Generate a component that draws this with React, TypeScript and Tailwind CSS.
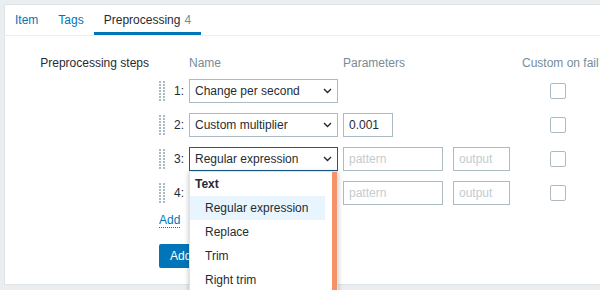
import React from 'react'

const font = { fontFamily: '"Liberation Sans", Arial, sans-serif' }

function DragHandle() {
  return (
    <svg width="6" height="20" viewBox="0 0 6 20" className="shrink-0">
      {[0, 3, 6, 9, 12, 15, 18].map(y => (
        <g key={y} fill="#acbbc2">
          <rect x="0" y={y} width="2" height="2" />
          <rect x="4" y={y} width="2" height="2" />
        </g>
      ))}
    </svg>
  )
}

function Chevron() {
  return (
    <svg width="9" height="6" viewBox="0 0 9 6" className="shrink-0">
      <path d="M1 1 L4.5 4.5 L8 1" fill="none" stroke="#1f2c33" strokeWidth="1.4" />
    </svg>
  )
}

function Select({ value, focused = false, children }: { value: string; focused?: boolean; children?: React.ReactNode }) {
  return (
    <div className="relative w-[149px] h-[24px] shrink-0">
      <div
        className={`w-full h-full flex items-center justify-between pl-[5px] pr-[5px] bg-white border ${
          focused ? 'border-[#1b5c8c]' : 'border-[#acbbc2]'
        }`}
      >
        <span className="text-[12px] text-[#1f2c33] truncate">{value}</span>
        <Chevron />
      </div>
      {children}
    </div>
  )
}

function Input({ w, value, placeholder }: { w: string; value?: string; placeholder?: string }) {
  return (
    <div className={`${w} h-[24px] border border-[#acbbc2] bg-white flex items-center px-[5px] shrink-0`}>
      {value ? (
        <span className="text-[12px] text-[#1f2c33]">{value}</span>
      ) : (
        <span className="text-[12px] text-[#c3ccd1]">{placeholder}</span>
      )}
    </div>
  )
}

function Checkbox() {
  return (
    <div className="w-[176px] flex">
      <div className="ml-[28px] w-[16px] h-[16px] border border-[#acbbc2] rounded-[2px] bg-white" />
    </div>
  )
}

// open option list of step 3, hangs below its select
function Dropdown() {
  const items = ['Regular expression', 'Replace', 'Trim', 'Right trim', 'Left trim']
  return (
    <div className="absolute top-full left-0 w-[149px] h-[200px] bg-white border border-[#dfe4e7] shadow-[0_1px_5px_rgba(0,0,0,0.25)] flex z-10">
      <div className="flex-1">
        <div className="h-[24px] flex items-center pl-[5px] text-[12px] font-bold text-[#1f2c33]">Text</div>
        {items.map((it, i) => (
          <div
            key={it}
            className={`h-[24px] flex items-center pl-[15px] text-[12px] text-[#1f2c33] ${i === 0 ? 'bg-[#e8f5ff]' : ''}`}
          >
            {it}
          </div>
        ))}
      </div>
      <div className="w-[12px] flex justify-end">
        <div className="w-[5px] h-full bg-[#f4926a]" />
      </div>
    </div>
  )
}

export default function App() {
  return (
    <div className="w-full h-[290px] overflow-hidden bg-[#ebeef0] pt-[4px] pl-[4px]" style={font}>
      <div className="bg-white border border-r-0 border-[#dfe4e7] h-[281px]">
        {/* tabs */}
        <div className="h-[31px] flex border-b border-[#ebeef0] text-[12px]">
          <a className="px-[10px] flex items-center text-[#0275b8]">Item</a>
          <a className="px-[10px] flex items-center text-[#0275b8]">Tags</a>
          <div className="px-[10px] flex items-center text-[#1f2c33] border-b-[3px] border-[#0275b8] pt-[3px]">
            Preprocessing<span className="ml-[4px] text-[#768d99]">4</span>
          </div>
        </div>

        {/* form */}
        <div className="flex pt-[15px] text-[12px] text-[#1f2c33]">
          <div className="w-[144px] h-[24px] flex items-center justify-end shrink-0">Preprocessing steps</div>
          <div className="ml-[10px] flex flex-col">
            <div className="h-[24px] flex items-center text-[#768d99]">
              <div className="w-[30px]" />
              <div className="w-[154px]">Name</div>
              <div className="w-[179px]">Parameters</div>
              <div className="whitespace-nowrap">Custom on fail</div>
            </div>

            <div className="flex flex-col gap-[10px] mt-[4px]">
              <div className="h-[24px] flex items-center">
                <DragHandle />
                <div className="w-[19px] text-right">1:</div>
                <div className="ml-[5px]"><Select value="Change per second" /></div>
                <div className="w-[179px] ml-[5px]" />
                <Checkbox />
              </div>
              <div className="h-[24px] flex items-center">
                <DragHandle />
                <div className="w-[19px] text-right">2:</div>
                <div className="ml-[5px]"><Select value="Custom multiplier" /></div>
                <div className="w-[179px] ml-[5px] flex">
                  <Input w="w-[50px]" value="0.001" />
                </div>
                <Checkbox />
              </div>
              <div className="h-[24px] flex items-center relative z-10">
                <DragHandle />
                <div className="w-[19px] text-right">3:</div>
                <div className="ml-[5px]">
                  <Select value="Regular expression" focused>
                    <Dropdown />
                  </Select>
                </div>
                <div className="w-[179px] ml-[5px] flex gap-[10px]">
                  <Input w="w-[100px]" placeholder="pattern" />
                  <Input w="w-[57px]" placeholder="output" />
                </div>
                <Checkbox />
              </div>
              <div className="h-[24px] flex items-center">
                <DragHandle />
                <div className="w-[19px] text-right">4:</div>
                <div className="ml-[5px]"><Select value="" /></div>
                <div className="w-[179px] ml-[5px] flex gap-[10px]">
                  <Input w="w-[100px]" placeholder="pattern" />
                  <Input w="w-[57px]" placeholder="output" />
                </div>
                <Checkbox />
              </div>
            </div>

            <div className="h-[24px] mt-[3px] flex items-center">
              <span className="text-[#0275b8] leading-[14px] border-b border-dotted border-[#0275b8]">Add</span>
            </div>
            <div className="mt-[12px]">
              <button className="h-[24px] px-[11px] bg-[#0275b8] text-white text-[12px] rounded-[2px]">Add</button>
            </div>
          </div>
        </div>
      </div>
    </div>
  )
}
